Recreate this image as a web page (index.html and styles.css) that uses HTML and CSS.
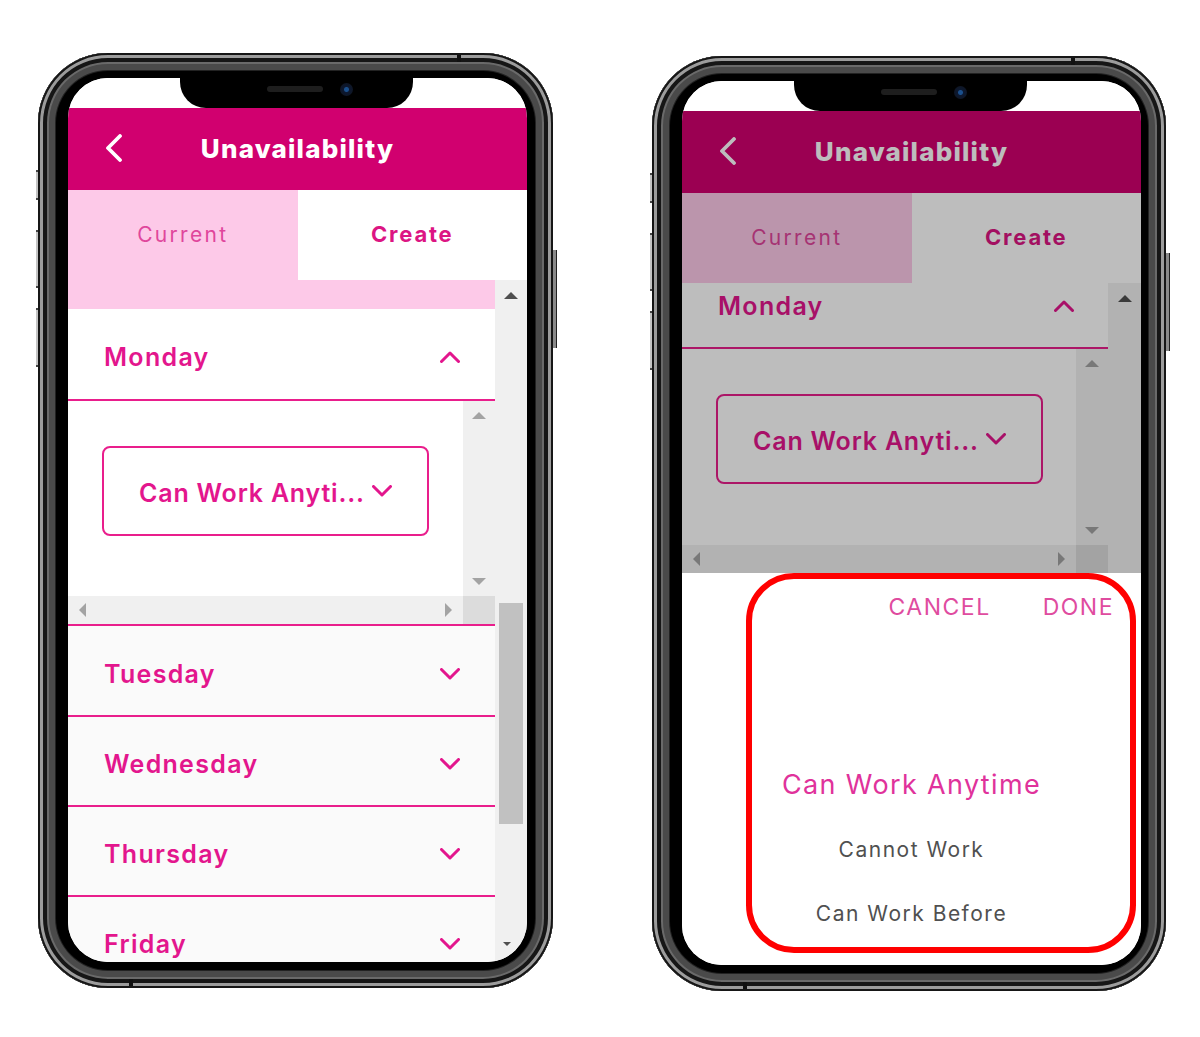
FILE: index.html
```html
<!DOCTYPE html>
<html lang="en">
<head>
<meta charset="utf-8">
<title>Unavailability</title>
<link rel="stylesheet" href="styles.css">
</head>
<body>
<svg class="defs" width="0" height="0" aria-hidden="true">
  <symbol id="chev-down" viewBox="0 0 20 12"><path d="M1.5 1.5 10 10l8.500-8.500" fill="none" stroke="currentColor" stroke-width="3" stroke-linecap="round" stroke-linejoin="round"/></symbol>
  <symbol id="chev-up" viewBox="0 0 20 12"><path d="M1.5 10.500 10 2l8.500 8.500" fill="none" stroke="currentColor" stroke-width="3" stroke-linecap="round" stroke-linejoin="round"/></symbol>
  <symbol id="chev-back" viewBox="0 0 18 28"><path d="M15 2 3 14l12 12" fill="none" stroke="currentColor" stroke-width="3.800" stroke-linecap="round" stroke-linejoin="round"/></symbol>
</svg>
<main class="stage">

  <section class="phone">
    <i class="side-btn side-l1"></i><i class="side-btn side-l2"></i><i class="side-btn side-l3"></i><i class="side-btn side-r1"></i>
    <i class="seam seam-top"></i><i class="seam seam-bottom"></i>
    <div class="screen">
      <div class="status"></div>
      <header class="app-header">
        <svg class="back"><use href="#chev-back"/></svg>
        <h1>Unavailability</h1>
      </header>
      <nav class="tabs">
        <div class="tab tab-current">Current</div>
        <div class="tab tab-create">Create</div>
      </nav>
      <div class="body-row">
        <div class="scroll-content">
          <div class="strip"></div>
          <div class="day-row day-open">Monday<svg class="chev"><use href="#chev-up"/></svg></div>
          <div class="panel">
            <div class="panel-main">
              <div class="panel-inner">
                <div class="select">Can Work Anyti...<svg class="chev-small"><use href="#chev-down"/></svg></div>
              </div>
              <div class="vbar"><i class="tri tri-up"></i><i class="tri tri-down"></i></div>
            </div>
            <div class="hbar"><div class="hbar-track"><i class="tri tri-left"></i><i class="tri tri-right"></i></div><div class="corner"></div></div>
          </div>
          <div class="day-row day-first">Tuesday<svg class="chev"><use href="#chev-down"/></svg></div>
          <div class="day-row">Wednesday<svg class="chev"><use href="#chev-down"/></svg></div>
          <div class="day-row">Thursday<svg class="chev"><use href="#chev-down"/></svg></div>
          <div class="day-row">Friday<svg class="chev"><use href="#chev-down"/></svg></div>
        </div>
        <div class="outer-bar">
          <i class="tri tri-up tri-dark"></i>
          <div class="thumb"></div>
          <i class="tri tri-tiny"></i>
        </div>
      </div>
    </div>
    <div class="notch"><span class="speaker"></span><span class="camera"></span></div>
  </section>

  <section class="phone phone-second">
    <i class="side-btn side-l1"></i><i class="side-btn side-l2"></i><i class="side-btn side-l3"></i><i class="side-btn side-r1"></i>
    <i class="seam seam-top"></i><i class="seam seam-bottom"></i>
    <div class="screen">
      <div class="status"></div>
      <div class="dimmed">
        <header class="app-header">
          <svg class="back"><use href="#chev-back"/></svg>
          <h1>Unavailability</h1>
        </header>
        <nav class="tabs">
          <div class="tab tab-current">Current</div>
          <div class="tab tab-create">Create</div>
        </nav>
        <div class="body-row body-short">
          <div class="scroll-content">
            <div class="day-row day-open day-scrolled">Monday<svg class="chev"><use href="#chev-up"/></svg></div>
            <div class="panel">
              <div class="panel-main">
                <div class="panel-inner">
                  <div class="select">Can Work Anyti...<svg class="chev-small"><use href="#chev-down"/></svg></div>
                </div>
                <div class="vbar"><i class="tri tri-up"></i><i class="tri tri-down"></i></div>
              </div>
              <div class="hbar"><div class="hbar-track"><i class="tri tri-left"></i><i class="tri tri-right"></i></div><div class="corner"></div></div>
            </div>
          </div>
          <div class="outer-bar"><i class="tri tri-up tri-dark"></i></div>
        </div>
      </div>
      <div class="sheet">
        <div class="sheet-actions"><span>CANCEL</span><span>DONE</span></div>
        <ul class="picker">
          <li class="picked">Can Work Anytime</li>
          <li>Cannot Work</li>
          <li>Can Work Before</li>
        </ul>
      </div>
      <div class="callout"></div>
    </div>
    <div class="notch"><span class="speaker"></span><span class="camera"></span></div>
  </section>

</main>
</body>
</html>
```
FILE: styles.css
```css
* { box-sizing: border-box; }
html, body { margin: 0; background: #fff; }
body { font-family: Inter, "Open Sans", sans-serif; height: 1037px; overflow: hidden; }
.defs { position: absolute; }
.stage { display: flex; gap: 99px; padding: 53px 0 0 38px; align-items: flex-start; }

.phone {
  position: relative;
  width: 515px;
  height: 935px;
  padding: 25px 26px 26px 30px;
  border-radius: 70px;
  background: #000;
  box-shadow:
    inset 0 0 0 2px #161616,
    inset 0 0 0 5px #9c9c9c,
    inset 0 0 0 9px #161616,
    inset 0 0 0 11px #6a6a6a,
    inset 0 0 0 17px #4a4a4a,
    inset 0 0 0 18px #222;
}
.phone-second { margin-top: 3px; width: 514px; padding-right: 25px; }

.side-btn { position: absolute; left: -2px; width: 2px; background: #c4c4c4; border-top: 2px solid #444; border-bottom: 2px solid #444; }
.side-l1 { top: 117px; height: 30px; }
.side-l2 { top: 177px; height: 58px; }
.side-l3 { top: 255px; height: 59px; }
.side-r1 { left: auto; right: -4px; width: 4px; top: 197px; height: 98px; background: #8a8a8a; border: 0; border-right: 1px solid #222; }

.seam { position: absolute; width: 4px; height: 7px; background: #111; }
.seam-top { left: 419px; top: 2px; }
.seam-bottom { left: 91px; bottom: 2px; }

.screen {
  position: relative;
  height: 100%;
  border-radius: 40px;
  background: #fff;
  overflow: hidden;
  display: flex;
  flex-direction: column;
}
.status { height: 30px; flex: none; background: #fff; }

.notch {
  position: absolute;
  left: 142px;
  top: 23px;
  width: 233px;
  height: 32px;
  background: #000;
  border-radius: 0 0 26px 26px;
  display: flex;
  align-items: center;
  justify-content: center;
  padding: 0 0 6px 26px;
  gap: 17px;
}
.speaker { width: 56px; height: 6px; border-radius: 3px; background: #1e1e1e; }
.camera { width: 13px; height: 13px; border-radius: 50%; background: radial-gradient(circle, #1a4f8c 0 2px, #0c1830 3px, #10141c 100%); }

.app-header {
  position: relative;
  height: 82px;
  flex: none;
  background: #d1006f;
  color: #fff;
  display: flex;
  align-items: center;
  justify-content: center;
  padding-bottom: 2px;
}
.app-header h1 { margin: 0; font-size: 26px; font-weight: 800; letter-spacing: 1.2px; }
.back { position: absolute; left: 37px; top: 26px; width: 18px; height: 28px; }

.tabs { display: flex; height: 90px; flex: none; }
.tab { flex: 1; display: flex; align-items: center; justify-content: center; color: #e0469c; padding-bottom: 2px; }
.tab-current { background: #fdc9e8; font-size: 21px; font-weight: 400; letter-spacing: 2.3px; }
.tab-create { background: #fff; font-size: 22px; font-weight: 700; color: #dc1583; letter-spacing: 1.8px; }

.body-row { display: flex; flex: 1; min-height: 0; }
.body-short { height: 290px; flex: none; }
.scroll-content { width: 427px; flex: none; overflow: hidden; background: #fafafa; }
.strip { height: 29px; background: #fdc9e8; }

.day-row {
  height: 90px;
  display: flex;
  align-items: center;
  justify-content: space-between;
  padding: 6px 35px 0 36px;
  font-size: 25px;
  font-weight: 600;
  letter-spacing: 1.3px;
  color: #e3168d;
  border-bottom: 2px solid #e91e8c;
}
.day-open { background: #fff; height: 92px; }
.day-first { height: 91px; }
.day-scrolled { height: 66px; padding-top: 0; padding-bottom: 18px; padding-right: 34px; }
.chev { width: 20px; height: 12px; }

.panel { background: #fff; border-bottom: 2px solid #e91e8c; }
.panel-main { display: flex; height: 195px; }
.panel-inner { flex: 1; padding: 45px 0 0 34px; }
.select {
  width: 327px;
  height: 90px;
  border: 2px solid #e91e8c;
  border-radius: 8px;
  display: flex;
  align-items: center;
  gap: 7px;
  padding: 3px 0 0 35px;
  font-size: 25px;
  font-weight: 600;
  letter-spacing: 0.8px;
  color: #e3168d;
}
.chev-small { width: 20px; height: 12px; margin-top: -4px; }
.vbar { width: 32px; flex: none; background: #f0f0f0; display: flex; flex-direction: column; justify-content: space-between; align-items: center; padding: 11px 0 11px; }
.hbar { display: flex; height: 28px; }
.hbar-track { flex: 1; background: #f0f0f0; display: flex; align-items: center; justify-content: space-between; padding: 0 11px; }
.corner { width: 32px; background: #dcdcdc; }

.tri { display: block; width: 0; height: 0; border-style: solid; border-color: transparent; }
.tri-up { border-width: 0 7px 7px; border-bottom-color: #a3a3a3; }
.tri-down { border-width: 7px 7px 0; border-top-color: #a3a3a3; }
.tri-left { border-width: 7px 7px 7px 0; border-right-color: #a3a3a3; }
.tri-right { border-width: 7px 0 7px 7px; border-left-color: #a3a3a3; }
.tri-dark { border-bottom-color: #4f4f4f; }
.tri-tiny { border-width: 4px 4px 0; border-top-color: #4f4f4f; margin: 118px 0 0 -8px; }

.outer-bar {
  flex: 1;
  background: #f0f0f0;
  display: flex;
  flex-direction: column;
  align-items: center;
  padding: 12px 0 0;
}
.thumb { width: 24px; height: 221px; margin: 304px 0 0 -1px; background: #c1c1c1; }

.dimmed { position: relative; flex: none; }
.dimmed::after { content: ""; position: absolute; inset: 0; background: rgba(0, 0, 0, 0.26); }
.phone-second .scroll-content { width: 426px; }
.phone-second .panel-main { height: 196px; }
.phone-second .panel { border-bottom: 0; }

.sheet { flex: 1; background: #fff; }
.sheet-actions {
  height: 68px;
  display: flex;
  justify-content: flex-end;
  align-items: center;
  gap: 52px;
  padding-right: 27px;
  font-size: 23px;
  font-weight: 400;
  letter-spacing: 1.5px;
  color: #df4c9f;
}
.picker { list-style: none; margin: 0; padding: 112px 0 0; text-align: center; }
.picker li { height: 64px; line-height: 66px; font-size: 21px; letter-spacing: 1.5px; color: #505050; }
.picker .picked { font-size: 27px; line-height: 64px; letter-spacing: 1.35px; color: #e0329b; }

.callout {
  position: absolute;
  left: 64px;
  top: 492px;
  width: 390px;
  height: 380px;
  border: 6px solid #f00;
  border-radius: 48px;
}
```
